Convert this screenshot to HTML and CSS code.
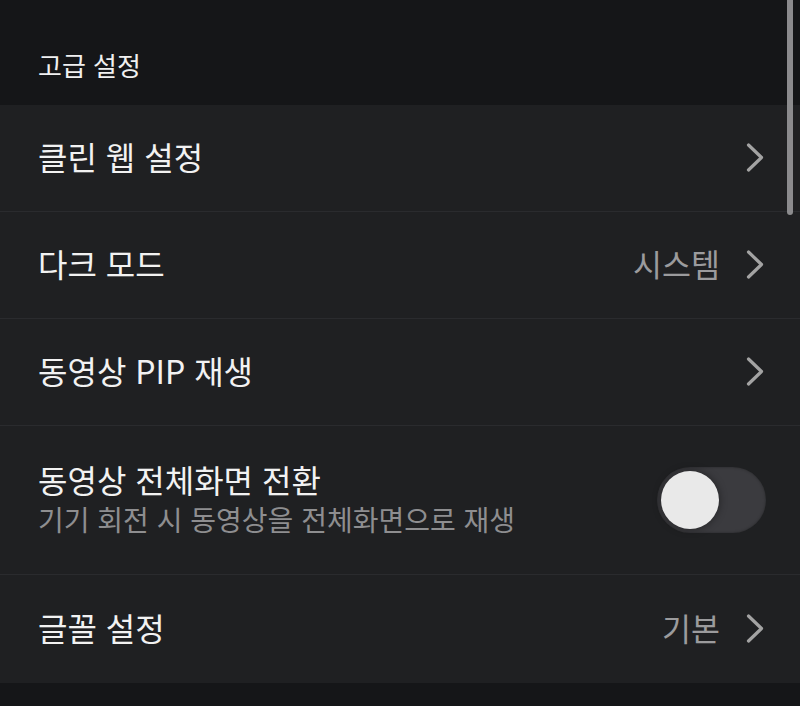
FILE: index.html
```html
<!DOCTYPE html>
<html lang="ko">
<head>
<meta charset="utf-8">
<link rel="stylesheet" href="styles.css">
</head>
<body>
<div class="screen">
  <div class="section-title">고급 설정</div>
  <div class="list">
    <div class="row">
      <div class="label">클린 웹 설정</div>
      <div class="right">
        <svg class="chev" viewBox="0 0 20 30" width="20" height="30"><path d="M2.5 2 L15.5 14.5 L2.5 27" fill="none" stroke="#a3a3a3" stroke-width="3.2" stroke-linecap="round" stroke-linejoin="round"/></svg>
      </div>
    </div>
    <div class="row">
      <div class="label">다크 모드</div>
      <div class="right">
        <span class="value">시스템</span>
        <svg class="chev" viewBox="0 0 20 30" width="20" height="30"><path d="M2.5 2 L15.5 14.5 L2.5 27" fill="none" stroke="#a3a3a3" stroke-width="3.2" stroke-linecap="round" stroke-linejoin="round"/></svg>
      </div>
    </div>
    <div class="row">
      <div class="label">동영상 PIP 재생</div>
      <div class="right">
        <svg class="chev" viewBox="0 0 20 30" width="20" height="30"><path d="M2.5 2 L15.5 14.5 L2.5 27" fill="none" stroke="#a3a3a3" stroke-width="3.2" stroke-linecap="round" stroke-linejoin="round"/></svg>
      </div>
    </div>
    <div class="row row-tall">
      <div class="texts">
        <div class="label">동영상 전체화면 전환</div>
        <div class="sub">기기 회전 시 동영상을 전체화면으로 재생</div>
      </div>
      <div class="right">
        <div class="toggle"><div class="knob"></div></div>
      </div>
    </div>
    <div class="row row-last">
      <div class="label">글꼴 설정</div>
      <div class="right">
        <span class="value">기본</span>
        <svg class="chev" viewBox="0 0 20 30" width="20" height="30"><path d="M2.5 2 L15.5 14.5 L2.5 27" fill="none" stroke="#a3a3a3" stroke-width="3.2" stroke-linecap="round" stroke-linejoin="round"/></svg>
      </div>
    </div>
  </div>
  <div class="scrollbar"></div>
</div>
</body>
</html>
```
FILE: styles.css
```css
html, body {
  margin: 0;
  padding: 0;
  background: #151618;
}
body {
  font-family: "Noto Sans CJK KR", "Noto Sans", sans-serif;
  color: #f2f2f2;
}
.screen {
  position: relative;
  width: 800px;
  height: 706px;
  overflow: hidden;
  background: #151618;
}
.section-title {
  box-sizing: border-box;
  height: 105px;
  padding: 46px 0 0 38px;
  font-size: 26px;
  line-height: 38px;
  color: #f0f0f0;
}
.list {
  background: #1f2022;
}
.row {
  box-sizing: border-box;
  height: 107px;
  display: flex;
  align-items: center;
  justify-content: space-between;
  padding: 0 34px 0 38px;
  border-bottom: 1px solid #2a2b2e;
}
.row-tall {
  height: 149px;
}
.row-last {
  height: 108px;
  border-bottom: none;
}
.label {
  font-size: 32px;
  line-height: 44px;
  color: #f2f2f2;
  margin-top: -5px;
}
.texts {
  display: flex;
  flex-direction: column;
  margin-top: -6px;
}
.texts .label {
  margin-top: 0;
}
.sub {
  font-size: 28px;
  line-height: 36px;
  color: #8e8e90;
}
.right {
  display: flex;
  align-items: center;
}
.value {
  font-size: 31.5px;
  line-height: 40px;
  color: #9b9b9d;
  margin-right: 26px;
  margin-top: -4px;
}
.chev {
  display: block;
}
.toggle {
  position: relative;
  width: 109px;
  height: 66px;
  border-radius: 33px;
  background: #3b3b3f;
  box-shadow: inset 0 0 3px rgba(0,0,0,0.35);
}
.knob {
  position: absolute;
  left: 4px;
  top: 4px;
  width: 58px;
  height: 58px;
  border-radius: 50%;
  background: #e9e9e9;
  box-shadow: 0 0 8px rgba(0,0,0,0.45);
}
.scrollbar {
  position: absolute;
  right: 7px;
  top: 0;
  width: 6px;
  height: 215px;
  border-radius: 0 0 3px 3px;
  background: #8b8b8d;
}
```
